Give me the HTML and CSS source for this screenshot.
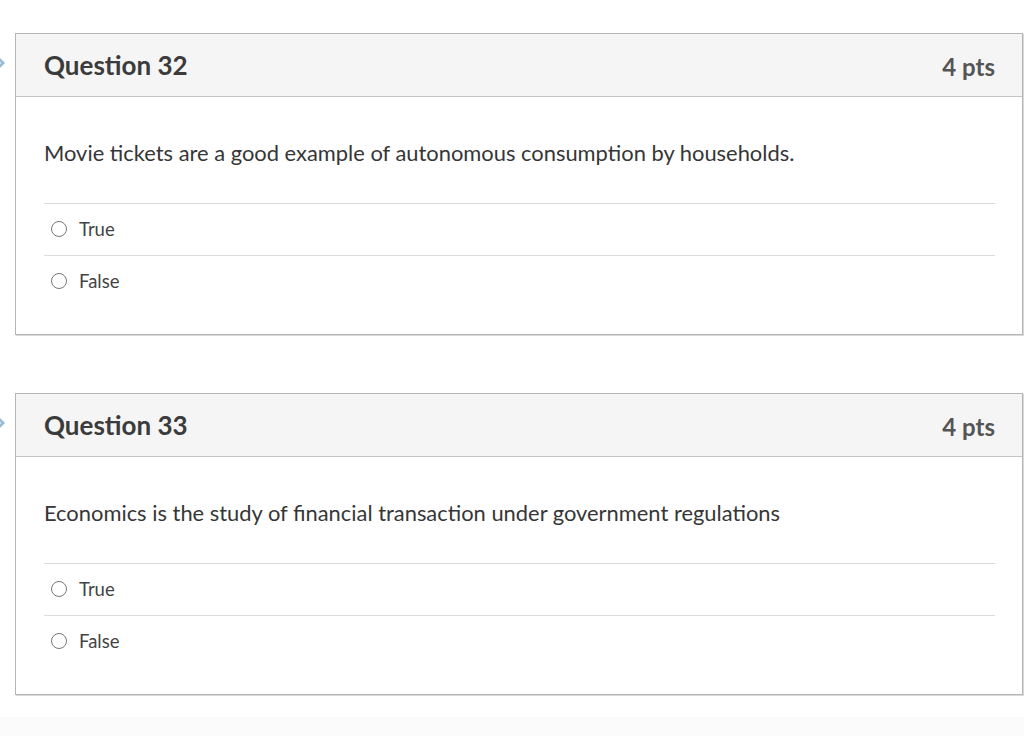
FILE: index.html
```html
<!DOCTYPE html>
<html lang="en">
<head>
<meta charset="utf-8">
<title>Quiz</title>
<link rel="stylesheet" href="styles.css">
</head>
<body>
<main class="quiz">
  <section class="question">
    <svg class="marker" width="12" height="14" viewBox="0 0 12 14"><path d="M3 1 L9 7 L3 13" fill="none" stroke="#9dbcd9" stroke-width="3" stroke-linecap="round"/></svg>
    <header class="q-header">
      <h2 class="q-title">Question 32</h2>
      <span class="q-pts">4 pts</span>
    </header>
    <div class="q-body">
      <p class="q-text">Movie tickets are a good example of autonomous consumption by households.</p>
      <div class="answers">
        <label class="answer"><span class="radio"></span><span class="answer-label">True</span></label>
        <label class="answer"><span class="radio"></span><span class="answer-label">False</span></label>
      </div>
    </div>
  </section>
  <section class="question">
    <svg class="marker" width="12" height="14" viewBox="0 0 12 14"><path d="M3 1 L9 7 L3 13" fill="none" stroke="#9dbcd9" stroke-width="3" stroke-linecap="round"/></svg>
    <header class="q-header">
      <h2 class="q-title">Question 33</h2>
      <span class="q-pts">4 pts</span>
    </header>
    <div class="q-body">
      <p class="q-text">Economics is the study of financial transaction under government regulations</p>
      <div class="answers">
        <label class="answer"><span class="radio"></span><span class="answer-label">True</span></label>
        <label class="answer"><span class="radio"></span><span class="answer-label">False</span></label>
      </div>
    </div>
  </section>
  <div class="footer-band"></div>
</main>
</body>
</html>
```
FILE: styles.css
```css
* { box-sizing: border-box; }
html, body { margin: 0; padding: 0; background: #fff; }
body {
  font-family: Lato, "Open Sans", "Liberation Sans", sans-serif;
  color: #2d2d2d;
  width: 1024px;
  height: 736px;
  overflow: hidden;
}
.quiz {
  display: flex;
  flex-direction: column;
  gap: 58px;
  padding: 33px 1px 0 15px;
}
.question {
  position: relative;
  border: 1px solid #b5b5b5;
  box-shadow: 1px 1px 0 #d8d8d8;
  background: #fff;
  height: 302px;
}
.marker {
  position: absolute;
  left: -22px;
  top: 22px;
}
.q-header {
  display: flex;
  align-items: center;
  justify-content: space-between;
  height: 63px;
  padding: 0 27px 0 28px;
  background: #f5f5f5;
  border-bottom: 1px solid #c4c4c4;
}
.q-title {
  margin: 0;
  font-size: 26px;
  font-weight: 700;
  color: #3b3b3b;
}
.q-pts {
  font-size: 24px;
  font-weight: 700;
  color: #555;
  padding-top: 2px;
}
.q-body {
  padding: 41px 27px 0 28px;
}
.q-text {
  margin: 0 0 35px 0;
  font-size: 21.9px;
  line-height: 30px;
  color: #363636;
}
.answers {
  display: flex;
  flex-direction: column;
}
.answer {
  display: flex;
  align-items: center;
  gap: 12px;
  height: 52px;
  padding-left: 7px;
  padding-bottom: 2px;
  border-top: 1px solid #dcdcdc;
}
.radio {
  width: 16px;
  height: 16px;
  border: 1.5px solid #777;
  border-radius: 50%;
  background: #fff;
}
.answer-label {
  font-size: 18.5px;
  color: #444;
}
.footer-band {
  height: 40px;
  margin: -36px -1px 0 -15px;
  background: #fbfbfb;
}
```
